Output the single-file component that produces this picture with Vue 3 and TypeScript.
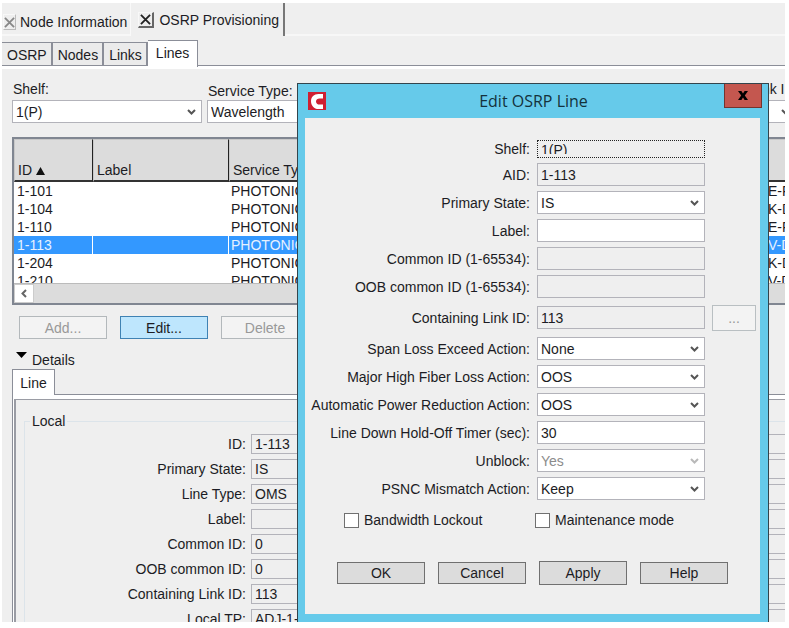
<script setup lang="ts">
import { reactive, ref } from 'vue'

interface LineRow {
  id: string
  service: string
  tail: string
}

interface DialogField {
  key: string
  label: string
  kind: 'clipped' | 'readonly' | 'text' | 'select' | 'off'
  value: string
  browse?: boolean
}

const subTabs = ['OSRP', 'Nodes', 'Links', 'Lines']
const activeSubTab = ref('Lines')

const rows: LineRow[] = [
  { id: '1-101', service: 'PHOTONIC', tail: 'E-F' },
  { id: '1-104', service: 'PHOTONIC', tail: 'K-D' },
  { id: '1-110', service: 'PHOTONIC', tail: 'E-F' },
  { id: '1-113', service: 'PHOTONIC', tail: 'V-D' },
  { id: '1-204', service: 'PHOTONIC', tail: 'K-D' },
  { id: '1-210', service: 'PHOTONIC', tail: 'V-D' },
]
const selectedId = ref('1-113')

const details = [
  { label: 'ID:', value: '1-113' },
  { label: 'Primary State:', value: 'IS' },
  { label: 'Line Type:', value: 'OMS' },
  { label: 'Label:', value: '' },
  { label: 'Common ID:', value: '0' },
  { label: 'OOB common ID:', value: '0' },
  { label: 'Containing Link ID:', value: '113' },
  { label: 'Local TP:', value: 'ADJ-1-' },
]

const fields = reactive<DialogField[]>([
  { key: 'shelf', label: 'Shelf:', kind: 'clipped', value: '1(P)' },
  { key: 'aid', label: 'AID:', kind: 'readonly', value: '1-113' },
  { key: 'state', label: 'Primary State:', kind: 'select', value: 'IS' },
  { key: 'label', label: 'Label:', kind: 'text', value: '' },
  { key: 'common', label: 'Common ID (1-65534):', kind: 'readonly', value: '' },
  { key: 'oob', label: 'OOB common ID (1-65534):', kind: 'readonly', value: '' },
  { key: 'link', label: 'Containing Link ID:', kind: 'readonly', value: '113', browse: true },
  { key: 'span', label: 'Span Loss Exceed Action:', kind: 'select', value: 'None' },
  { key: 'fiber', label: 'Major High Fiber Loss Action:', kind: 'select', value: 'OOS' },
  { key: 'power', label: 'Automatic Power Reduction Action:', kind: 'select', value: 'OOS' },
  { key: 'timer', label: 'Line Down Hold-Off Timer (sec):', kind: 'text', value: '30' },
  { key: 'unblock', label: 'Unblock:', kind: 'off', value: 'Yes' },
  { key: 'psnc', label: 'PSNC Mismatch Action:', kind: 'select', value: 'Keep' },
])

const lockout = ref(false)
const maintenance = ref(false)
</script>

<template>
  <div class="page">
    <main class="app">
      <nav class="top-tabs">
        <div class="top-tab">
          <button class="tab-close muted" aria-label="Close Node Information">
            <svg viewBox="0 0 12 12"><path d="M1 1l10 10M11 1L1 11" /></svg>
          </button>
          <a href="#node">Node Information</a>
        </div>
        <div class="top-tab current">
          <button class="tab-close" aria-label="Close OSRP Provisioning">
            <svg viewBox="0 0 12 12"><path d="M1 1l10 10M11 1L1 11" /></svg>
          </button>
          <a href="#osrp">OSRP Provisioning</a>
        </div>
      </nav>

      <div class="sub-tabs">
        <button
          v-for="tab in subTabs"
          :key="tab"
          :class="{ active: tab === activeSubTab }"
          @click="activeSubTab = tab"
        >{{ tab }}</button>
      </div>

      <section class="body">
        <div class="filters">
          <div class="filter">
            <label for="f-shelf">Shelf:</label>
            <div class="combo">
              <select id="f-shelf"><option>1(P)</option></select>
              <svg viewBox="0 0 9 6"><path d="M1 1l3.500 3.500L8 1" /></svg>
            </div>
          </div>
          <div class="filter low">
            <label for="f-service">Service Type:</label>
            <div class="combo">
              <select id="f-service"><option>Wavelength</option></select>
              <svg viewBox="0 0 9 6"><path d="M1 1l3.500 3.500L8 1" /></svg>
            </div>
          </div>
          <div class="filter wide">
            <label for="f-link">Link ID:</label>
            <div class="combo">
              <select id="f-link"><option></option></select>
              <svg viewBox="0 0 9 6"><path d="M1 1l3.500 3.500L8 1" /></svg>
            </div>
          </div>
        </div>

        <div class="table-box">
          <div class="table-view">
            <table>
              <colgroup>
                <col class="c-id" /><col class="c-label" /><col /><col class="c-tail" />
              </colgroup>
              <thead>
                <tr>
                  <th>ID <svg class="sort" viewBox="0 0 9 8"><path d="M4.500 0L9 8H0z" /></svg></th>
                  <th>Label</th>
                  <th>Service Type</th>
                  <th class="last"></th>
                </tr>
              </thead>
              <tbody>
                <tr
                  v-for="row in rows"
                  :key="row.id"
                  :class="{ selected: row.id === selectedId }"
                  @click="selectedId = row.id"
                >
                  <td>{{ row.id }}</td>
                  <td></td>
                  <td>{{ row.service }}</td>
                  <td>{{ row.tail }}</td>
                </tr>
              </tbody>
            </table>
          </div>
          <div class="scrollbar">
            <button aria-label="Scroll left">
              <svg viewBox="0 0 6 9"><path d="M5 1L1.500 4.500L5 8" /></svg>
            </button>
          </div>
        </div>

        <div class="actions">
          <button class="btn" disabled>Add...</button>
          <button class="btn primary">Edit...</button>
          <button class="btn" disabled>Delete</button>
        </div>

        <button class="disclosure">
          <svg viewBox="0 0 11 6"><path d="M0 0h11L5.500 6z" /></svg>
          Details
        </button>

        <div class="line-tabs"><button>Line</button></div>
        <div class="line-panel">
          <div class="line-inner">
            <fieldset>
              <legend>Local</legend>
              <div class="detail-grid">
                <template v-for="(d, i) in details" :key="d.label">
                  <label :for="'d' + i">{{ d.label }}</label>
                  <input :id="'d' + i" :value="d.value" readonly />
                </template>
              </div>
            </fieldset>
          </div>
        </div>
      </section>
    </main>

    <div class="dialog" role="dialog" aria-labelledby="dialog-title">
      <header class="title-bar">
        <svg class="logo" viewBox="0 0 18 18">
          <rect width="18" height="18" fill="#cf1f31" />
          <path d="M15 2H10.500C6 2 3 5 3 9.200S6 17 10.500 17H15V12.500H11.500C9.500 12.500 8 11.300 8 9.400S9.500 6.500 11.500 6.500H15z" fill="#fff" />
        </svg>
        <h1 id="dialog-title">Edit OSRP Line</h1>
        <button class="close" aria-label="Close">
          <svg viewBox="0 0 10 9"><path d="M0 0h3.400L5 2.500 6.600 0H10L6.800 4.500 10 9H6.600L5 6.500 3.400 9H0l3.200-4.500z" /></svg>
        </button>
      </header>

      <form class="content" @submit.prevent>
        <div class="form">
          <div v-for="f in fields" :key="f.key" class="row" :class="{ tall: f.browse }">
            <label :for="f.key">{{ f.label }}</label>
            <output v-if="f.kind === 'clipped'" :id="f.key" class="clipped"><span>{{ f.value }}</span></output>
            <div v-else-if="f.kind === 'select' || f.kind === 'off'" class="combo" :class="{ off: f.kind === 'off' }">
              <select :id="f.key" v-model="f.value" :disabled="f.kind === 'off'">
                <option>{{ f.value }}</option>
              </select>
              <svg viewBox="0 0 9 6"><path d="M1 1l3.500 3.500L8 1" /></svg>
            </div>
            <input v-else :id="f.key" v-model="f.value" type="text" :readonly="f.kind === 'readonly'" />
            <button v-if="f.browse" type="button" class="browse" disabled>...</button>
          </div>
        </div>

        <div class="checks">
          <label><input v-model="lockout" type="checkbox" />Bandwidth Lockout</label>
          <label><input v-model="maintenance" type="checkbox" />Maintenance mode</label>
        </div>

        <div class="buttons">
          <button>OK</button>
          <button type="button">Cancel</button>
          <button type="button" class="default">Apply</button>
          <button type="button">Help</button>
        </div>
      </form>
    </div>
  </div>
</template>

<style>
body {
  background: #fff;
}
</style>

<style scoped>
* {
  box-sizing: border-box;
}

.page {
  position: relative;
  height: 100vh;
  padding: 3px 4px 6px 2px;
  font: 14px/16px "Liberation Sans", Arial, sans-serif;
  color: #1c1c24;
}

button,
input,
select {
  margin: 0;
  font: inherit;
  color: inherit;
  border-radius: 0;
}

.app {
  height: 100%;
  overflow: hidden;
  background: #efefef;
}

/* document tabs */
.top-tabs {
  display: flex;
  height: 33px;
  border-bottom: 2px solid #f7f7f7;
}

.top-tab {
  display: flex;
  align-items: center;
  gap: 4px;
  padding: 7px 3px 0 1px;
}

.top-tab a {
  color: inherit;
  text-decoration: none;
}

.top-tab.current {
  height: 33px;
  gap: 5px;
  padding: 1px 4px 0 7px;
  background: #efefef;
  border-left: 1px solid #f9f9f9;
  border-right: 2px solid #777;
}

.tab-close {
  display: grid;
  place-items: center;
  width: 16px;
  height: 16px;
  padding: 0;
  background: #eee;
  border: 1px solid #f8f8f8;
  border-right: 2px solid #666;
  border-bottom: 2px solid #666;
}

.tab-close svg {
  width: 11px;
  height: 11px;
  stroke: #222;
  stroke-width: 2;
}

.tab-close.muted {
  width: 13px;
  border-right: 1px solid #bbb;
  border-bottom: 1px solid #bbb;
}

.tab-close.muted svg {
  stroke: #888;
}

/* section tabs */
.sub-tabs {
  display: flex;
  align-items: flex-end;
  height: 30px;
  border-bottom: 1px solid #8b8e98;
}

.sub-tabs button {
  height: 23px;
  padding: 2px 4px 0 5px;
  background: #ebebeb;
  border: 1px solid #8b8e98;
  border-width: 1px 2px 0 0;
}

.sub-tabs button.active {
  height: 27px;
  margin-bottom: -2px;
  padding: 0 8px 2px;
  background: #fff;
  border-width: 1px 1px 0 0;
}

.body {
  padding-left: 10px;
  border-top: 3px solid #fff;
}

/* filters */
.filters {
  display: grid;
  grid-template-columns: 190px 1fr 35px;
  gap: 5px;
  padding-top: 12px;
}

.filter label {
  display: block;
  height: 19px;
  padding-left: 1px;
  white-space: nowrap;
}

.low label {
  padding-top: 2px;
}

.wide .combo {
  width: 46px;
}

.combo {
  display: grid;
  align-items: center;
}

.combo > * {
  grid-area: 1 / 1;
}

.combo select {
  width: 100%;
  height: 23px;
  padding: 0 3px;
  appearance: none;
  background: #fff;
  border: 1px solid #b3b3ba;
  outline: 0;
}

.combo svg {
  width: 9px;
  height: 6px;
  margin-right: 6px;
  justify-self: end;
  fill: none;
  stroke: #555;
  stroke-width: 2;
  pointer-events: none;
}

.combo.off select {
  color: #8c8c8c;
  opacity: 1;
}

.combo.off svg {
  stroke: #b9b9b9;
}

/* lines table */
.table-box {
  margin-top: 14px;
  border: 2px solid #808691;
  border-right: 0;
  background: #fff;
}

.table-view {
  height: 144px;
  overflow: hidden;
}

table {
  width: 100%;
  table-layout: fixed;
  border-collapse: separate;
  border-spacing: 0;
}

.c-id {
  width: 79px;
}

.c-label {
  width: 136px;
}

.c-tail {
  width: 19px;
}

th {
  height: 43px;
  padding: 0 3px 2px;
  vertical-align: bottom;
  text-align: left;
  font-weight: normal;
  white-space: nowrap;
  overflow: hidden;
  background: #dcdcdc;
  border: 1px solid #c8c8c8;
  border-right: 1px solid #222;
  border-bottom: 2px solid #333;
}

th.last {
  border-right: 0;
  border-left: 0;
}

.sort {
  width: 9px;
  height: 8px;
  fill: #111;
}

td {
  height: 18px;
  padding: 0 2px;
  overflow: hidden;
  white-space: nowrap;
}

td:first-child {
  padding-left: 3px;
}

.selected td {
  color: #e6f1ff;
  background: #3398ff;
  border-right: 1px solid #fff;
}

.selected td:last-child {
  border-right: 0;
}

.scrollbar {
  height: 20px;
  background: #dcdcdc;
  border-top: 1px solid #bbb;
}

.scrollbar button {
  display: grid;
  place-items: center;
  width: 20px;
  height: 19px;
  padding: 0;
  background: #fff;
  border: 1px solid #ccc;
}

.scrollbar svg {
  width: 6px;
  height: 9px;
  fill: none;
  stroke: #666;
  stroke-width: 2;
}

.actions {
  display: flex;
  gap: 13px;
  padding: 11px 0 0 7px;
}

.btn {
  width: 88px;
  height: 23px;
  padding: 0;
  background: #f3f3f3;
  border: 1px solid #b3b8bb;
}

.btn:disabled,
.browse:disabled {
  color: #999;
}

.btn.primary {
  background: #bee6fd;
  border: 1px solid #3f82b3;
}

.disclosure {
  display: flex;
  gap: 5px;
  margin-top: 13px;
  padding: 0 0 0 4px;
  background: none;
  border: 0;
  line-height: 17px;
}

.disclosure svg {
  width: 11px;
  height: 6px;
}

/* details */
.line-tabs button {
  display: block;
  width: 43px;
  height: 26px;
  margin-bottom: -1px;
  padding: 0;
  background: #fff;
  border: 1px solid #8b8e98;
  border-bottom: 0;
}

.line-tabs {
  position: relative;
}

.line-panel {
  padding: 4px 0 0 1px;
  background: #fff;
  border: 1px solid #8b8e98;
  border-width: 1px 0 0 1px;
}

.line-inner {
  padding: 13px 0 0 8px;
  background: #efefef;
  border: 2px solid #9a9ca4;
  border-width: 1px 0 0 2px;
}

fieldset {
  min-width: 0;
  margin: 0;
  padding: 0 0 20px;
  border: 1px solid #dce4ea;
  border-right: 0;
}

legend {
  margin-left: 5px;
  padding: 0 2px;
}

.detail-grid {
  display: grid;
  grid-template-columns: 221px 1fr;
  gap: 5px;
  padding-top: 5px;
}

.detail-grid label {
  text-align: right;
  line-height: 20px;
}

.detail-grid input {
  width: 100%;
  height: 20px;
  padding: 0 3px;
  background: #efefef;
  border: 1px solid #b3b3ba;
  border-right: 0;
  outline: 0;
}

/* edit window */
.dialog {
  position: absolute;
  top: 83px;
  right: 20px;
  bottom: 6px;
  left: 297px;
  display: flex;
  flex-direction: column;
  padding: 0 8px 8px 7px;
  background: #66caea;
  border: 1px solid #33444c;
  border-bottom: 0;
}

.title-bar {
  display: grid;
  grid-template-columns: 38px 1fr 38px;
  align-items: center;
  height: 34px;
  margin-right: -2px;
}

.logo {
  width: 18px;
  height: 18px;
  margin-left: 3px;
}

h1 {
  margin: 0;
  text-align: center;
  font: 16px/22px "Open Sans", "Noto Sans", sans-serif;
  color: #14323c;
}

.close {
  display: grid;
  place-items: center;
  align-self: start;
  width: 38px;
  height: 24px;
  padding: 0;
  background: #c4574f;
  border: 1px solid #74342f;
  border-top: 0;
}

.close svg {
  width: 10px;
  height: 9px;
}

.content {
  flex: 1;
  padding-top: 22px;
  background: #efefef;
}

.form {
  display: grid;
  gap: 5px;
}

.row {
  display: grid;
  grid-template-columns: 1fr 168px 44px;
  column-gap: 7px;
  align-items: center;
  padding-right: 4px;
}

.tall {
  height: 29px;
}

.row label {
  text-align: right;
  white-space: nowrap;
}

.row > input {
  width: 100%;
  height: 23px;
  padding: 0 3px;
  background: #fff;
  border: 1px solid #b3b3ba;
  outline: 0;
}

.row > input:read-only {
  background: #efefef;
}

.clipped {
  height: 18px;
  padding: 1px 3px;
  border: 1px dotted #222;
}

.clipped span {
  display: block;
  height: 12px;
  overflow: hidden;
  line-height: 16px;
}

.browse {
  height: 26px;
  padding: 0;
  background: #f3f3f3;
  border: 1px solid #b9bfc2;
}

.checks {
  display: grid;
  grid-template-columns: 191px auto;
  padding: 12px 0 0 39px;
}

.checks label {
  display: flex;
  align-items: center;
  gap: 5px;
}

.checks input {
  width: 15px;
  height: 15px;
  appearance: none;
  background: #fff;
  border: 1px solid #707070;
}

.checks input:checked {
  background: #3398ff;
}

.buttons {
  display: flex;
  justify-content: center;
  align-items: center;
  gap: 13px;
  margin-top: 33px;
}

.buttons button {
  width: 88px;
  height: 22px;
  padding: 0;
  background: #dcdcdc;
  border: 1px solid #707070;
}

.buttons .default {
  height: 24px;
}
</style>
